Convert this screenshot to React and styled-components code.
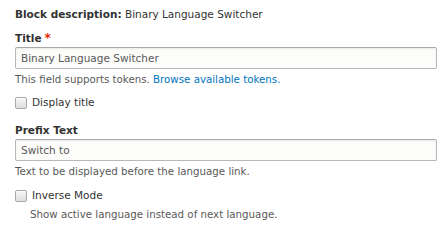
import React from "react";
import styled, { createGlobalStyle } from "styled-components";

const GlobalStyle = createGlobalStyle`
    body {
        margin: 0;
        background: #ffffff;
        font-family: "DejaVu Sans", Verdana, sans-serif;
        color: #333333;
    }
`;

const Page = styled.div`
    padding: 7px 3px 0 15px;
`;

const Summary = styled.div`
    font-size: 10.5px;
    line-height: 14px;
    color: #333;
    margin-bottom: 10px;

    strong {
        font-weight: bold;
    }
`;

const FormItem = styled.div`
    margin-bottom: ${({ gap }) => gap}px;
`;

const Label = styled.label`
    display: block;
    font-size: 10.5px;
    line-height: 14px;
    font-weight: bold;
    color: #333;
    margin-bottom: 2px;
`;

const Required = styled.span`
    color: #e32700;
    margin-left: 3px;
    font-size: 12px;
`;

const TextInput = styled.input`
    display: block;
    box-sizing: border-box;
    width: 100%;
    height: 22px;
    margin: 0;
    padding: 0 5px;
    font-family: "DejaVu Sans", Verdana, sans-serif;
    font-size: 10.5px;
    color: #595959;
    background: #fcfcfa;
    border: 1px solid #b8b8b8;
    border-top-color: #a8a8a8;
    border-radius: 2px;
    box-shadow: inset 0 1px 2px rgba(0, 0, 0, 0.08);
    outline: none;
`;

const Description = styled.div`
    font-size: 10.25px;
    line-height: 13px;
    color: #595959;
    margin-top: ${({ indent }) => (indent ? 6 : 4)}px;
    padding-left: ${({ indent }) => (indent ? 15 : 0)}px;

    a {
        color: #0074bd;
        text-decoration: none;
    }
`;

const CheckRow = styled.label`
    display: flex;
    align-items: center;
    gap: 5px;
    font-size: 10.5px;
    line-height: 14px;
    color: #333;
`;

const Box = styled.span`
    display: inline-block;
    box-sizing: border-box;
    width: 12px;
    height: 12px;
    border: 1px solid #a8a8a8;
    border-radius: 2px;
    background: linear-gradient(#f6f6f6, #dedede);
    box-shadow: inset 0 1px 0 #ffffff;
    margin-top: 1px;
`;

const Checkbox = ({ label }) => (
    <CheckRow>
        <Box />
        {label}
    </CheckRow>
);

const App = () => {
    return (
        <>
            <GlobalStyle />
            <Page>
                <Summary>
                    <strong>Block description:</strong> Binary Language Switcher
                </Summary>
                <FormItem gap={9}>
                    <Label>
                        Title<Required>*</Required>
                    </Label>
                    <TextInput defaultValue="Binary Language Switcher" />
                    <Description>
                        This field supports tokens. <a href="#tokens">Browse available tokens.</a>
                    </Description>
                </FormItem>
                <FormItem gap={14}>
                    <Checkbox label="Display title" />
                </FormItem>
                <FormItem gap={10}>
                    <Label>Prefix Text</Label>
                    <TextInput defaultValue="Switch to" />
                    <Description>Text to be displayed before the language link.</Description>
                </FormItem>
                <FormItem gap={0}>
                    <Checkbox label="Inverse Mode" />
                    <Description indent>Show active language instead of next language.</Description>
                </FormItem>
            </Page>
        </>
    );
};

export default App;
